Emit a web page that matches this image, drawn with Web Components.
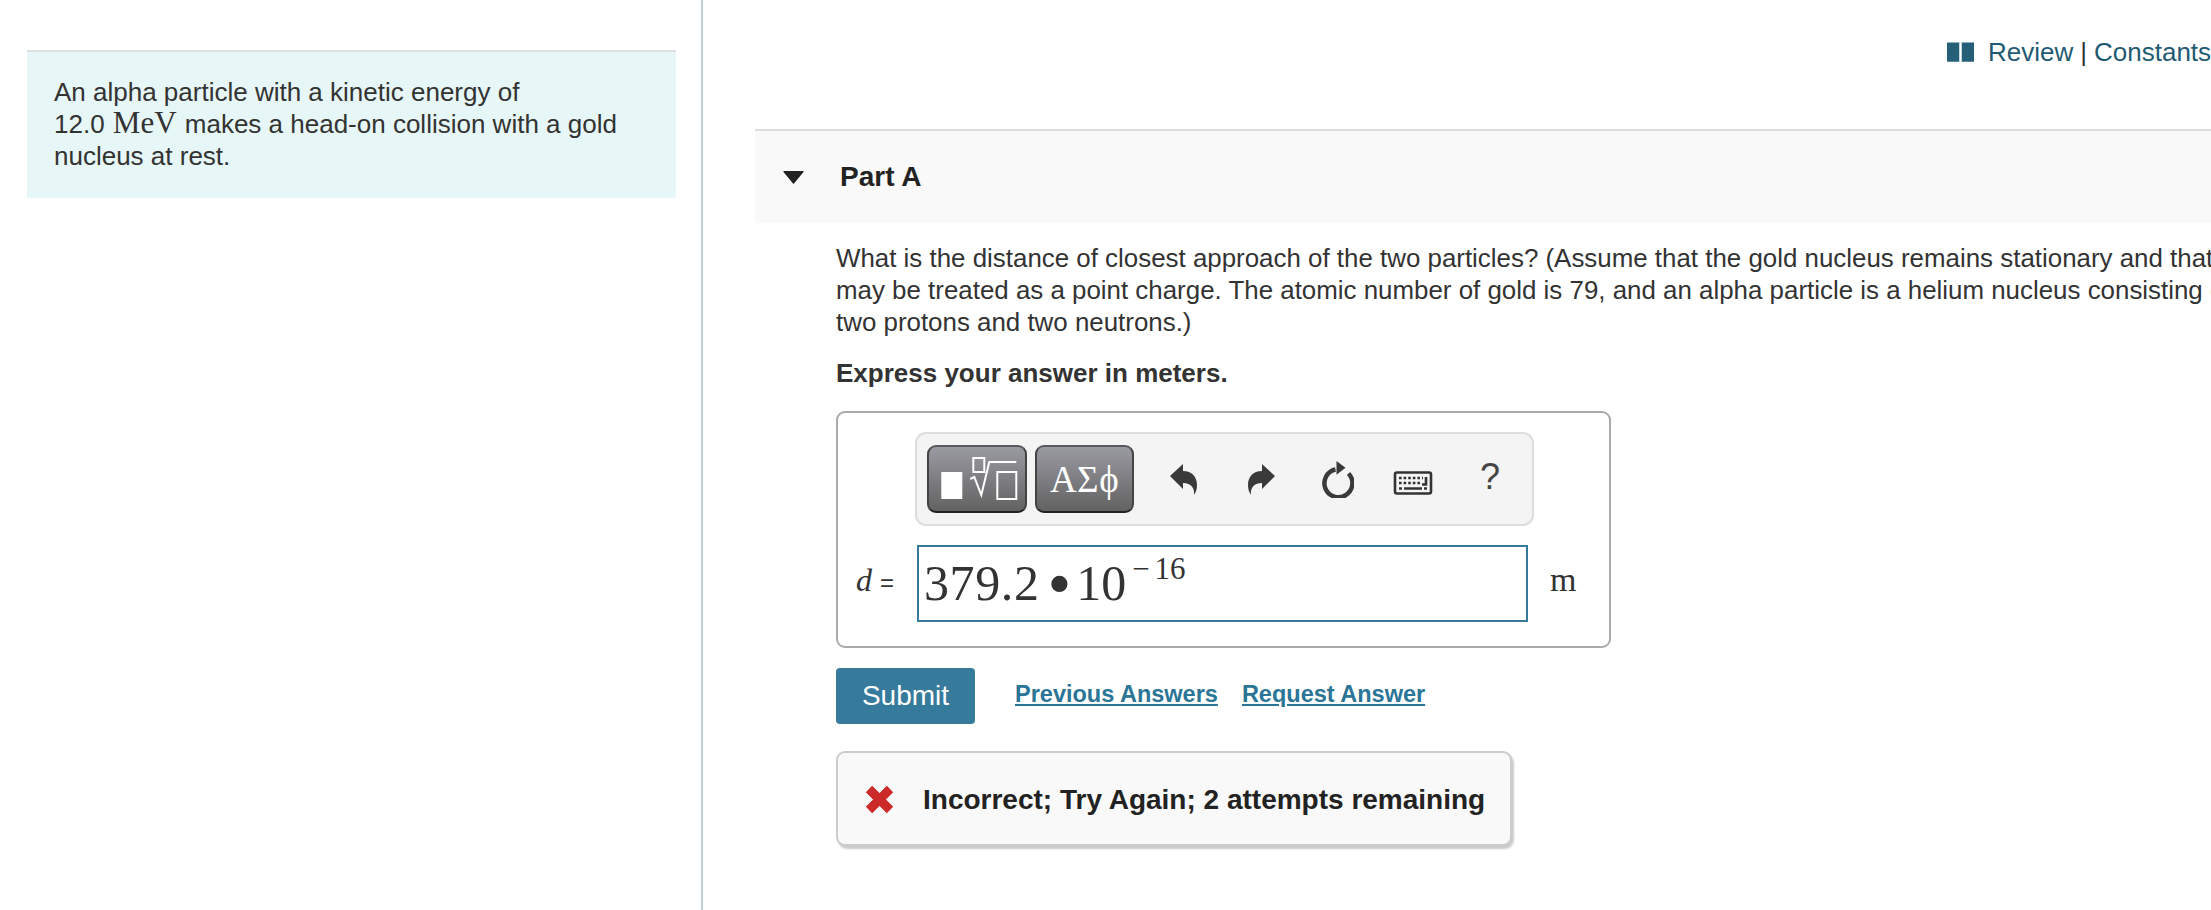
<!DOCTYPE html>
<html><head><meta charset="utf-8"><style>
html,body{margin:0;padding:0;background:#fff;height:910px;overflow:hidden}
body{font-family:"Liberation Sans",Arial,sans-serif;color:#333}
</style></head><body>
<quiz-page>
  <intro-panel slot="side">An alpha particle with a kinetic energy of<br>12.0 <math-text>MeV</math-text> makes a head-on collision with a gold<br>nucleus at rest.</intro-panel>
  <review-links slot="top"></review-links>
  <part-header slot="main">Part A</part-header>
  <part-body slot="main">
    <p class="q">What is the distance of closest approach of the two particles? (Assume that the gold nucleus remains stationary and that it<br>may be treated as a point charge. The atomic number of gold is 79, and an alpha particle is a helium nucleus consisting of<br>two protons and two neutrons.)</p>
    <answer-box></answer-box>
  </part-body>
</quiz-page>
<script>
function def(name, css, html){
  customElements.define(name, class extends HTMLElement{
    constructor(){super();const r=this.attachShadow({mode:'open'});r.innerHTML='<style>'+css+'</style>'+html;}
  });
}
def('quiz-page',`
:host{display:flex;width:2211px;height:910px;overflow:hidden}
.side{width:703px;flex:none;box-sizing:border-box;border-right:2px solid #c0cfdc;padding:50px 0 0 27px;height:910px}
.right{flex:1;min-width:0;padding:0 0 0 52px;overflow:hidden}
`,`<div class="side"><slot name="side"></slot></div><div class="right"><slot name="top"></slot><slot name="main"></slot></div>`);
def('intro-panel',`
:host{display:block;box-sizing:border-box;background:#e7f6f6;border-top:2px solid #dfdfdf;padding:24px 27px 0;height:148px;font-size:26px;line-height:32px;color:#333;width:649px}
`,`<slot></slot>`);
def('math-text',`:host{display:inline-block;font-family:"Liberation Serif",serif;font-size:31px;line-height:24px;margin:0 1px}`,`<slot></slot>`);
def('review-links',`
:host{display:flex;align-items:center;height:129px;box-sizing:border-box;padding:0 0 25px 1192px;font-size:26px;color:#1f5a73;white-space:nowrap}
svg{margin-right:14px;flex:none}
i{font-style:normal;color:#333;margin:0 7px}
`,`<svg width="27" height="22" viewBox="0 0 27 22"><path fill="#8fb2c0" d="M0 1h12.500v20H0zM14.500 1H27v20H14.500z"/><path fill="#265f78" d="M0 2h12v18.500H0zM15 2h12v18.500H15z"/></svg><span>Review</span><i>|</i><span>Constants</span>`);
def('part-header',`
:host{display:flex;align-items:center;box-sizing:border-box;height:94px;border-top:2px solid #ddd;background:#f9f9f9;width:1456px;font-weight:bold;font-size:28px;color:#222}
svg{margin:0 36px 0 28px;flex:none}
`,`<svg width="21" height="13" viewBox="0 0 21 13"><path fill="#222" d="M1 0h19q1 0 .5 1L11 12.500q-.5.500-1 0L.5 1Q0 0 1 0z"/></svg><slot></slot>`);
def('part-body',`
:host{display:block;padding:19px 0 0 81px;width:1500px;font-size:25.9px;line-height:32px;color:#333}
::slotted(p.q){margin:0;white-space:nowrap}
`,`<slot></slot>`);
def('answer-box',`
:host{display:block;margin-top:19px}
.express{font-weight:bold;font-size:26px;line-height:32px;margin-bottom:22px}
.box{box-sizing:border-box;width:775px;height:237px;border:2px solid #aaa;border-radius:9px;padding:19px 0 0 77px;background:#fff}
.tb{box-sizing:border-box;width:619px;height:94px;background:#f4f4f4;border:2px solid #ddd;border-radius:11px;display:flex;align-items:center;padding:0 0 0 10px}
.btn{box-sizing:border-box;width:100px;height:68px;flex:none;border-radius:9px;border:2px solid;border-color:#5a5a5e #444 #222;background:linear-gradient(#9a9aa2,#626262);color:#fff;display:flex;align-items:center;justify-content:center;font:37px "Liberation Serif",serif}
.btn+.btn{width:99px;margin-left:8px;letter-spacing:.5px}
.ic{display:block;flex:none}
.q{font:36px "Liberation Sans",sans-serif;color:#444;margin-left:47px;line-height:1;position:relative;top:-2px}
.row{display:flex;align-items:center;margin-top:19px}
.d{width:0;flex:none}
.lab{font:32px "Liberation Serif",serif;color:#333;margin-left:-59px;width:59px;display:block;white-space:nowrap;position:relative;top:-3px}
.lab span{font:24px "Liberation Sans",sans-serif}
.inp{box-sizing:border-box;width:611px;height:77px;border:2px solid #367a9c;font:50px "Liberation Serif",serif;color:#333;padding:0 0 2px 5px;white-space:nowrap;display:flex;align-items:center;margin-left:2px;flex:none}
.inp .n{letter-spacing:.6px}
.inp .sup{font-size:31px;position:relative;top:-14px;margin-left:6px;word-spacing:-3px}
.dot{margin:0 5px 0 8px;font-size:68px;line-height:0}
.unit{font:34px "Liberation Serif",serif;margin-left:22px;color:#333;position:relative;top:-4px}
.act{display:flex;align-items:flex-start;margin-top:20px}
.sub{box-sizing:border-box;width:139px;height:56px;background:#367a9c;border-radius:4px;color:#fff;display:flex;align-items:center;justify-content:center;font-size:28px}
.lnk{color:#2b7597;font-weight:bold;text-decoration:underline;font-size:23.500px;line-height:52px}
.fb{box-sizing:border-box;width:676px;height:95px;margin-top:27px;background:#f9f9f9;border:2px solid #ccc;border-radius:9px;box-shadow:2px 3px 2px #ccc;display:flex;align-items:center;padding:2px 0 0 27px;font-weight:bold;font-size:28px;color:#222;white-space:nowrap}
.fb svg{margin-right:29px;flex:none}
`,`<div class="express">Express your answer in meters.</div>
<div class="box">
 <div class="tb">
  <div class="btn"><svg width="96" height="64" viewBox="0 0 96 64"><rect x="12.300" y="25" width="21" height="27" fill="#fff"/><path fill="none" stroke="#fff" stroke-width="2" d="M44.300 11h11v14h-11zM41.300 32l4-2 7 18 8-33h27M68.300 25h19v27h-19z"/></svg></div>
  <div class="btn">ΑΣϕ</div>
  <svg class="ic" style="margin-left:36px" width="27" height="32" viewBox="0 0 27 32"><path fill="#3a3a3a" d="M0 13 13 1v7c9 0 14 6 14 14 0 4-1 7-3 10 1-7-3-12-11-12v6z"/></svg>
  <svg class="ic" style="margin-left:51px" width="27" height="32" viewBox="0 0 27 32"><path fill="#3a3a3a" d="M27 13 14 1v7C5 8 0 14 0 22c0 4 1 7 3 10-1-7 3-12 11-12v6z"/></svg>
  <svg class="ic" style="margin-left:45px" width="34" height="38" viewBox="0 0 34 38"><path fill="none" stroke="#3a3a3a" stroke-width="4.500" d="M15.500 9.500a14 14 0 1 0 13 4"/><path fill="#3a3a3a" d="M16.500 1l9 6.800-9 7z"/></svg>
  <svg class="ic" style="margin-left:39px;position:relative;top:4px" width="40" height="24" viewBox="0 0 40 24"><rect x="2" y="1.500" width="36" height="21" rx="2" fill="none" stroke="#333" stroke-width="2.600"/><path stroke="#333" stroke-width="2.600" stroke-dasharray="2.600 2" d="M6 7h24M6 12h21"/><path stroke="#333" stroke-width="2.600" fill="none" d="M33 6v7.500h-4M11 17.500h18M6 17.500h3M31 17.500h3"/></svg>
  <div class="q">?</div>
 </div>
 <div class="row">
  <div class="d"><span class="lab"><i>d</i> <span>=</span></span></div>
  <div class="inp"><span class="n">379.2</span><span class="dot">•</span><span>10</span><span class="sup">− 16</span></div>
  <div class="unit">m</div>
 </div>
</div>
<div class="act"><div class="sub">Submit</div><span class="lnk" style="margin-left:40px">Previous Answers</span><span class="lnk" style="margin-left:24px">Request Answer</span></div>
<div class="fb"><svg width="29" height="29" viewBox="0 0 29 29"><path stroke="#cc2929" stroke-width="9" stroke-linejoin="round" d="M4 4l21 21M25 4 4 25"/></svg><span>Incorrect; Try Again; 2 attempts remaining</span></div>`);
</script>
</body></html>
